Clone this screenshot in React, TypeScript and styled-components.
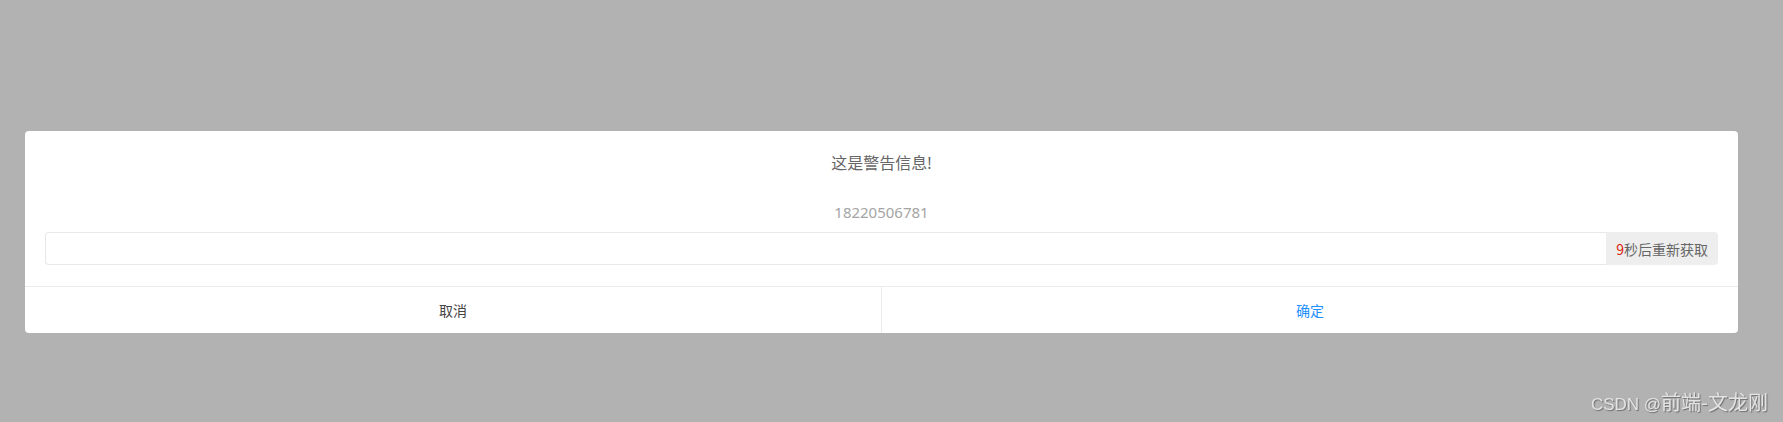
import React from 'react';
import styled, { createGlobalStyle } from 'styled-components';

const GlobalStyle = createGlobalStyle`
    html, body {
        margin: 0;
        padding: 0;
    }
    body {
        font-family: "Noto Sans", "Noto Sans CJK SC", sans-serif;
    }
`

const Mask = styled.div`
    position: fixed;
    inset: 0;
    background: #b2b2b2;
    display: flex;
    align-items: flex-start;
    padding: 131px 45px 0 25px;
`

const Dialog = styled.div`
    flex: 1;
    background: #fff;
    border-radius: 4px;
    overflow: hidden;
`

const Body = styled.div`
    padding: 20px 20px 21px;
`

const Title = styled.div`
    font-size: 16px;
    line-height: 24px;
    text-align: center;
    color: #666;
`

const Phone = styled.div`
    margin-top: 27px;
    font-size: 15px;
    line-height: 20px;
    text-align: center;
    color: #a5a5a5;
`

const InputGroup = styled.div`
    margin-top: 10px;
    display: flex;
    height: 33px;
`

const CodeInput = styled.input`
    flex: 1;
    min-width: 0;
    box-sizing: border-box;
    height: 100%;
    border: 1px solid #e8e8e8;
    border-right: none;
    border-radius: 4px 0 0 4px;
    outline: none;
    padding: 0 10px;
    font-size: 14px;
`

const CountDown = styled.button`
    height: 100%;
    border: none;
    border-radius: 0 4px 4px 0;
    background: #eeeeee;
    color: #666;
    padding: 0 10px;
    font-family: "Noto Sans CJK SC", sans-serif;
    font-size: 14px;
    white-space: nowrap;
`

const Seconds = styled.span`
    color: #d81e06;
`

const Footer = styled.div`
    display: flex;
    height: 46px;
    border-top: 1px solid #ebebeb;
`

const FooterButton = styled.div<{ $primary?: boolean }>`
    flex: 1;
    display: flex;
    align-items: center;
    justify-content: center;
    font-family: "Noto Sans CJK SC", sans-serif;
    font-size: 14px;
    color: ${p => p.$primary ? '#1e90ff' : '#444'};

    & + & {
        border-left: 1px solid #ebebeb;
    }
`

const Watermark = styled.div`
    position: fixed;
    right: 15px;
    bottom: 6px;
    color: #e4e4e4;
    text-shadow: 1px 1px 1px #6e6e6e;
    white-space: nowrap;
    display: flex;
    align-items: baseline;
`

const MarkLatin = styled.span`
    font-family: "Liberation Sans", sans-serif;
    font-size: 17px;
`

const MarkCjk = styled.span`
    font-family: "Noto Sans CJK SC", sans-serif;
    font-size: 20px;
`

const App = () => {
    const [seconds] = React.useState(9)

    return (
        <>
            <GlobalStyle />
            <Mask>
                <Dialog>
                    <Body>
                        <Title>这是警告信息!</Title>
                        <Phone>18220506781</Phone>
                        <InputGroup>
                            <CodeInput />
                            <CountDown>
                                <Seconds>{seconds}</Seconds>秒后重新获取
                            </CountDown>
                        </InputGroup>
                    </Body>
                    <Footer>
                        <FooterButton>取消</FooterButton>
                        <FooterButton $primary>确定</FooterButton>
                    </Footer>
                </Dialog>
            </Mask>
            <Watermark>
                <MarkLatin>CSDN @</MarkLatin>
                <MarkCjk>前端-文龙刚</MarkCjk>
            </Watermark>
        </>
    )
}

export default App
